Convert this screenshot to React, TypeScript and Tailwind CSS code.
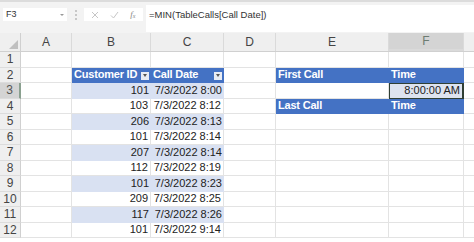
import React from "react";

const cols = ["A", "B", "C", "D", "E", "F", "G"];
const widths = ["w-[51px]", "w-[79px]", "w-[73px]", "w-[52px]", "w-[113px]", "w-[75px]", "w-[20px]"];

const data: [number, string][] = [
  [101, "7/3/2022 8:00"],
  [103, "7/3/2022 8:12"],
  [206, "7/3/2022 8:13"],
  [101, "7/3/2022 8:14"],
  [207, "7/3/2022 8:14"],
  [112, "7/3/2022 8:19"],
  [101, "7/3/2022 8:23"],
  [209, "7/3/2022 8:25"],
  [117, "7/3/2022 8:26"],
  [101, "7/3/2022 9:14"],
];

type Cell = { text?: string; kind?: "head" | "band" | "plain" | "sel"; align?: "left" | "right"; filter?: boolean };

function FilterBtn() {
  return (
    <span className="absolute right-[2px] top-[4px] w-[8px] h-[8px] bg-[#e8ecf4] flex items-center justify-center">
      <span className="w-0 h-0 border-l-[2.5px] border-r-[2.5px] border-t-[3px] border-l-transparent border-r-transparent border-t-[#555]" />
    </span>
  );
}

function getCell(row: number, col: number): Cell {
  // col index 0 = A
  if (row === 2) {
    if (col === 1) return { text: "Customer ID", kind: "head", filter: true };
    if (col === 2) return { text: "Call Date", kind: "head", filter: true };
    if (col === 4) return { text: "First Call", kind: "head" };
    if (col === 5) return { text: "Time", kind: "head" };
  }
  if (row === 3 && col === 5) return { text: "8:00:00 AM", kind: "sel", align: "right" };
  if (row === 4) {
    if (col === 4) return { text: "Last Call", kind: "head" };
    if (col === 5) return { text: "Time", kind: "head" };
  }
  if (row >= 3 && row <= 12 && (col === 1 || col === 2)) {
    const d = data[row - 3];
    const band = (row - 3) % 2 === 0;
    return { text: col === 1 ? String(d[0]) : d[1], kind: band ? "band" : "plain", align: "right" };
  }
  return {};
}

export default function App() {
  const rows = Array.from({ length: 12 }, (_, i) => i + 1);
  return (
    <div className="w-[474px] h-[242px] overflow-hidden bg-white text-[#222]" style={{ fontFamily: '"Liberation Sans", Arial, sans-serif' }}>
      {/* formula bar */}
      <div className="h-[33px] bg-[#f3f3f3] border-t-[2px] border-[#dcdcdc] flex items-start">
        <div className="mt-[6px] ml-[3px] w-[64px] h-[13px] bg-white flex items-center justify-between px-[3px] text-[9px] text-[#333]">
          <span>F3</span>
          <span className="w-0 h-0 border-l-[2px] border-r-[2px] border-t-[2px] border-l-transparent border-r-transparent border-t-[#999]" />
        </div>
        <div className="mt-[8px] ml-[8px] w-[2px] flex flex-col gap-[2px]">
          <span className="w-[2px] h-[2px] bg-[#c8c8c8]" />
          <span className="w-[2px] h-[2px] bg-[#c8c8c8]" />
          <span className="w-[2px] h-[2px] bg-[#c8c8c8]" />
        </div>
        <div className="mt-[6px] ml-[7px] w-[59px] h-[13px] bg-white flex items-center justify-around px-[2px] text-[#c2c2c2]">
          <svg width="8" height="8" viewBox="0 0 8 8" stroke="#c6c6c6" strokeWidth="1">
            <path d="M1 1L7 7M7 1L1 7" />
          </svg>
          <svg width="9" height="8" viewBox="0 0 9 8" stroke="#c6c6c6" strokeWidth="1" fill="none">
            <path d="M1 4.5L3.5 7L8 1" />
          </svg>
          <span className="text-[9px] italic text-[#888]" style={{ fontFamily: '"Liberation Serif", serif' }}>
            f<sub className="text-[6px]">x</sub>
          </span>
        </div>
        <div className="mt-[3px] ml-[3px] flex-1 h-[27px] bg-white pl-[3px] pt-[3px] text-[9.5px] text-[#333]">=MIN(TableCalls[Call Date])</div>
      </div>
      {/* column headers */}
      <div className="flex h-[19px] bg-[#efefef] border-b border-[#d0d0d0]">
        <div className="w-[21px] shrink-0 border-r border-[#d0d0d0] relative">
          <span className="absolute right-[2px] bottom-[2px] w-0 h-0 border-l-[9px] border-l-transparent" style={{ borderBottom: "9px solid #c0c0c0" }} />
        </div>
        {cols.map((c, i) => (
          <div
            key={c}
            className={`${widths[i]} shrink-0 flex items-center justify-center text-[12px] ${
              c === "F" ? "bg-[#d4d4d4] text-[#6d7d72] border-b-[2px] border-[#8aa08f]" : "text-[#444]"
            } ${i < 6 ? "border-r border-[#dadada]" : ""}`}
          >
            {c === "G" ? "" : c}
          </div>
        ))}
      </div>
      {/* rows */}
      {rows.map((r) => (
        <div key={r} className="flex h-[15.5px]">
          <div
            className={`w-[21px] shrink-0 flex items-center justify-center text-[12px] border-b ${
              r === 3 ? "bg-[#d4d4d4] border-r-[2px] border-r-[#8aa08f] text-[#555]" : "bg-[#efefef] border-r border-r-[#d0d0d0] text-[#444]"
            } border-b-[#dcdcdc]`}
          >
            {r}
          </div>
          {cols.map((c, i) => {
            const cell = getCell(r, i);
            let cls = "border-r border-b border-[#e3e3e3] bg-white";
            if (cell.kind === "head") cls = "bg-[#4472c4] text-white font-bold text-[10px] tracking-[-0.2px] border-b border-[#4472c4]";
            if (cell.kind === "band") cls = "bg-[#d9e1f2] border-b border-[#d9e1f2]";
            if (cell.kind === "sel") cls = "bg-[#dde3ef] border border-[#2f3f34] border-r-[2px]";
            return (
              <div
                key={c}
                className={`${widths[i]} shrink-0 relative flex items-center text-[11px] leading-none whitespace-nowrap overflow-visible ${
                  cell.align === "right" ? "justify-end pr-[2px]" : "pl-[2px]"
                } ${cls}`}
              >
                {cell.text}
                {cell.filter && <FilterBtn />}
              </div>
            );
          })}
        </div>
      ))}
    </div>
  );
}
